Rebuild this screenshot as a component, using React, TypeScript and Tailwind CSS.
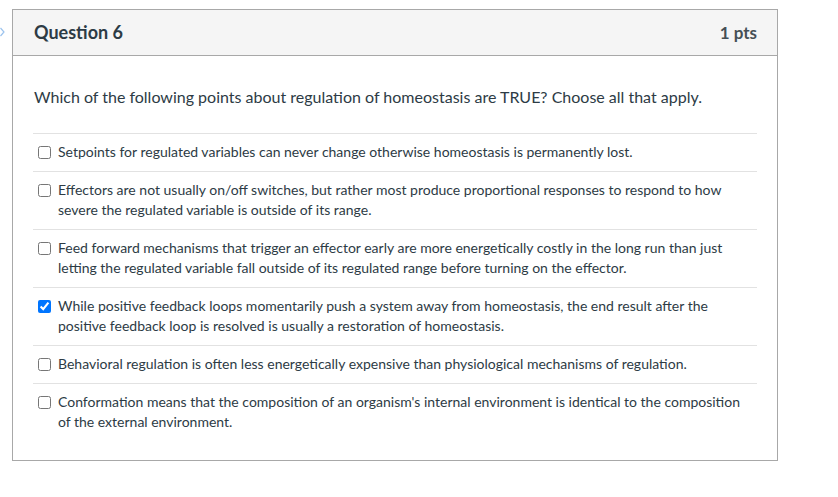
import React from "react";

const answers: { text: React.ReactNode; checked?: boolean }[] = [
  { text: "Setpoints for regulated variables can never change otherwise homeostasis is permanently lost." },
  {
    text: (
      <>
        Effectors are not usually on/off switches, but rather most produce proportional responses to respond to how
        <br />
        severe the regulated variable is outside of its range.
      </>
    ),
  },
  {
    text: (
      <>
        Feed forward mechanisms that trigger an effector early are more energetically costly in the long run than just
        <br />
        letting the regulated variable fall outside of its regulated range before turning on the effector.
      </>
    ),
  },
  {
    text: (
      <>
        While positive feedback loops momentarily push a system away from homeostasis, the end result after the
        <br />
        positive feedback loop is resolved is usually a restoration of homeostasis.
      </>
    ),
    checked: true,
  },
  { text: "Behavioral regulation is often less energetically expensive than physiological mechanisms of regulation." },
  {
    text: (
      <>
        Conformation means that the composition of an organism's internal environment is identical to the composition
        <br />
        of the external environment.
      </>
    ),
  },
];

export default function App() {
  return (
    <div
      className="relative w-[838px] h-[497px] bg-white text-[#2d3b45]"
      style={{ fontFamily: "Lato, 'Open Sans', sans-serif" }}
    >
      <svg className="absolute left-0 top-[27px]" width="6" height="10" viewBox="0 0 6 10">
        <path d="M0.5 1 L4 5 L0.5 9" fill="none" stroke="#9cc3ee" strokeWidth="1.2" />
      </svg>
      <div className="pt-[9px] pl-[12px]">
        <div className="w-[766px] border border-[#a8a8a8]">
          <div className="h-[46px] bg-[#f5f5f5] border-b border-[#a8a8a8] flex items-center justify-between pl-[21px] pr-[20px]">
            <span className="text-[18px] font-bold text-[#2d3b45]">Question 6</span>
            <span className="text-[17px] font-bold text-[#454f55]">1 pts</span>
          </div>
          <div className="pl-[20px] pr-[20px] pt-[29px] pb-[19px]">
            <div className="text-[16px] leading-[24px] pl-[1px] mb-[24px]">
              Which of the following points about regulation of homeostasis are TRUE? Choose all that apply.
            </div>
            <div>
              {answers.map((a, i) => (
                <div key={i} className="border-t border-[#e2e2e2] pt-[8px] pb-[9px] flex items-start">
                  <div className="w-[25px] h-[20px] flex items-center pl-[5px] shrink-0">
                    <input
                      type="checkbox"
                      defaultChecked={a.checked}
                      className="w-[13px] h-[13px] m-0"
                    />
                  </div>
                  <div className="text-[14px] leading-[20px] text-[#2d3b45]">{a.text}</div>
                </div>
              ))}
            </div>
          </div>
        </div>
      </div>
    </div>
  );
}
